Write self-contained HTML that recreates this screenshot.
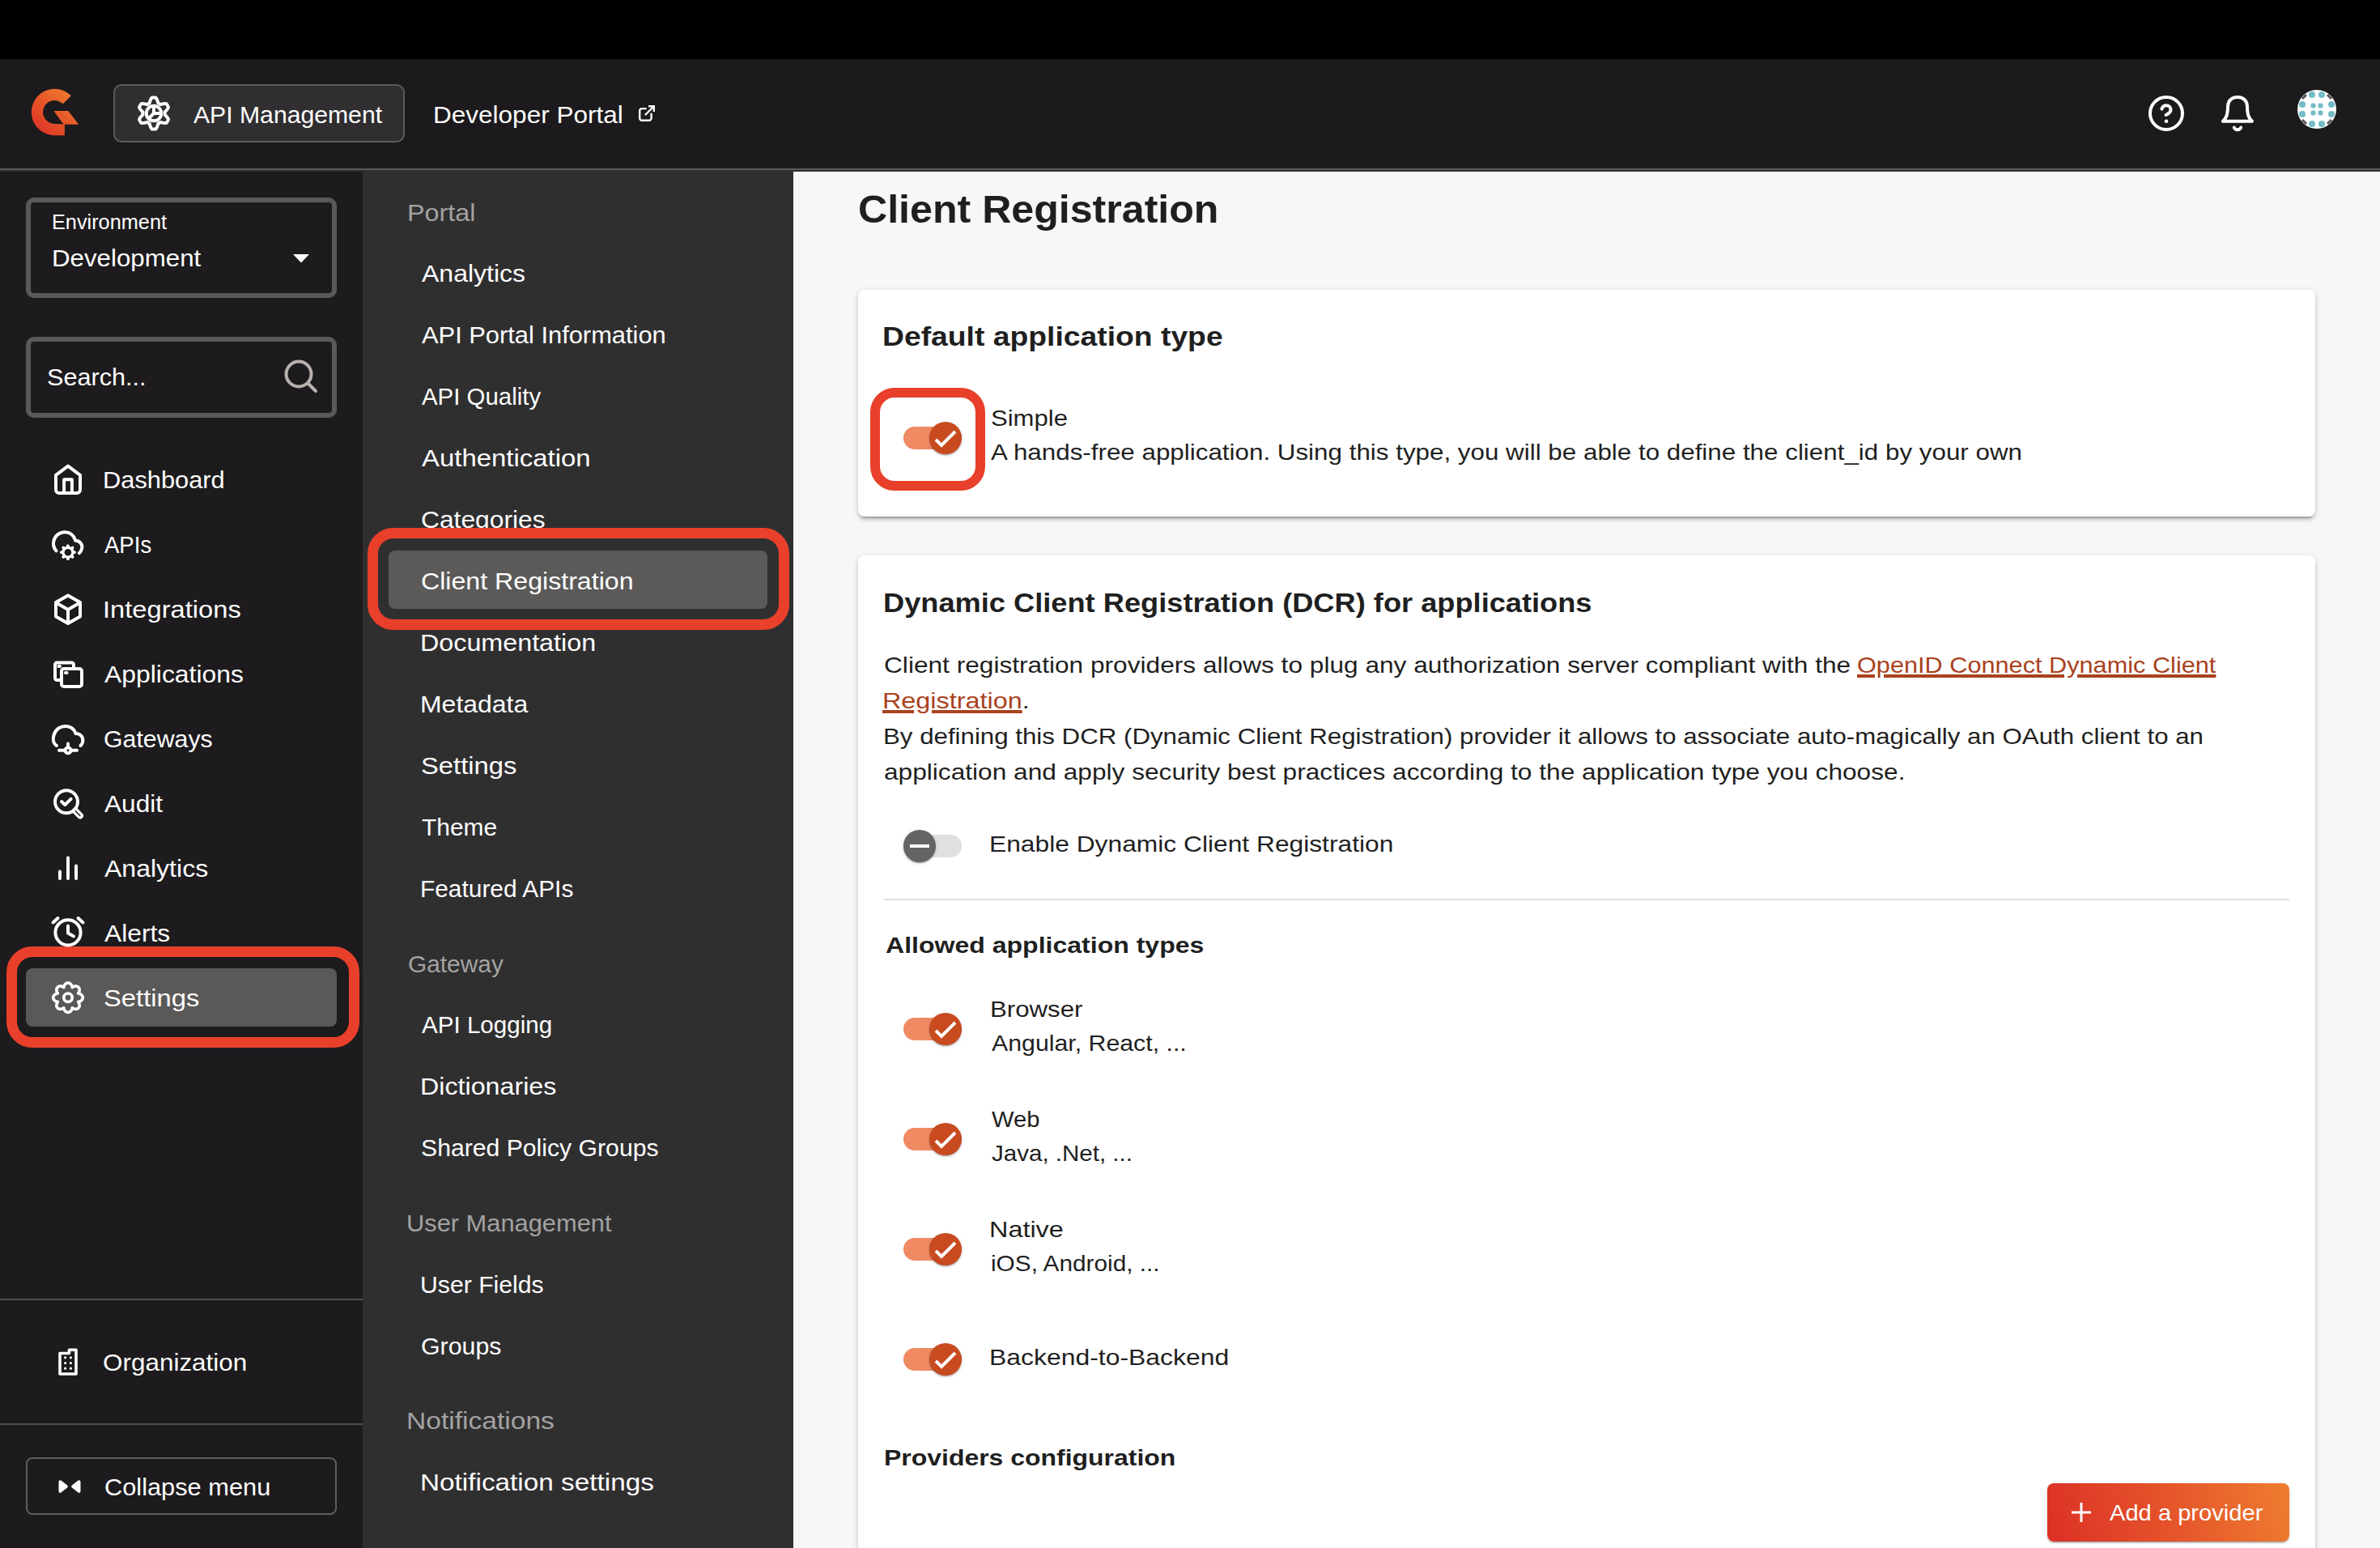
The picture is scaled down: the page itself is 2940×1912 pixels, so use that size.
<!DOCTYPE html>
<html><head><meta charset="utf-8">
<style>
*{box-sizing:border-box}
html,body{margin:0;padding:0}
body{width:2940px;height:1912px;overflow:hidden;background:#000;position:relative;font-family:"Liberation Sans",sans-serif}
.a{position:absolute}
.t{position:absolute;white-space:nowrap;line-height:1;transform-origin:0 0;font-family:"Liberation Sans",sans-serif}
.t u{text-decoration-thickness:3.5px;text-underline-offset:2px}
svg{position:absolute;overflow:visible}
.ic{fill:none;stroke:#fff;stroke-width:4;stroke-linecap:round;stroke-linejoin:round}
.card{position:absolute;background:#fff;border-radius:8px;box-shadow:0 6px 2px -4px rgba(0,0,0,.2),0 4px 4px 0 rgba(0,0,0,.14),0 2px 10px 0 rgba(0,0,0,.12)}
.trk{position:absolute;width:72px;height:28px;border-radius:14px;background:#ef8a63}
.thm{position:absolute;width:40px;height:40px;border-radius:20px;background:#c84a1f;box-shadow:0 2px 2px -1px rgba(0,0,0,.25),0 1px 2px 0 rgba(0,0,0,.14),0 1px 5px 0 rgba(0,0,0,.12)}
</style></head><body>
<!-- header -->
<div class="a" style="left:0;top:73px;width:2940px;height:135px;background:#1c1a1c"></div>
<div class="a" style="left:0;top:208px;width:2940px;height:2px;background:#5b5a5b"></div>
<div class="a" style="left:0;top:210px;width:2940px;height:2px;background:#302f30"></div>
<!-- sidebars -->
<div class="a" style="left:0;top:212px;width:448px;height:1700px;background:#1d1b1d"></div>
<div class="a" style="left:448px;top:212px;width:532px;height:1700px;background:#302f30"></div>
<div class="a" style="left:980px;top:212px;width:1960px;height:1700px;background:#f7f7f7"></div>

<!-- logo -->
<svg style="left:30px;top:100px" width="80" height="80" viewBox="0 0 80 80">
<defs><linearGradient id="lg" gradientUnits="userSpaceOnUse" x1="14" y1="66" x2="62" y2="14"><stop offset="0" stop-color="#dc2f24"/><stop offset="1" stop-color="#f07e30"/></linearGradient></defs>
<path fill="url(#lg)" d="M57.8 18.2 A28.7 28.7 0 1 0 37.5 67.2 L49.9 67.2 L49.9 53.5 L37.5 53.05 A14.5 14.5 0 1 1 47.75 28.25 Z"/>
<path fill="url(#lg)" d="M36.4 37 L54.3 37 L67.2 53.7 L48.6 53.7 Z"/>
</svg>
<!-- API management button -->
<div class="a" style="left:140px;top:104px;width:360px;height:72px;border:2px solid #5d5b5b;border-radius:10px;background:#302e30"></div>
<svg style="left:166px;top:116px" width="48" height="48" viewBox="0 0 48 48"><g class="ic">
<path d="M37.70 24.00 L37.70 24.24 L37.69 24.48 L37.68 24.72 L37.67 24.96 L37.65 25.19 L37.62 25.43 L37.60 25.67 L37.84 25.95 L38.12 26.24 L38.42 26.54 L38.73 26.86 L39.05 27.20 L39.38 27.55 L39.71 27.92 L40.03 28.30 L40.35 28.69 L40.65 29.09 L40.94 29.50 L41.20 29.92 L41.44 30.35 L41.65 30.77 L41.82 31.20 L41.95 31.62 L41.81 31.93 L41.67 32.24 L41.53 32.55 L41.37 32.85 L41.22 33.15 L41.06 33.45 L40.89 33.75 L40.71 34.04 L40.54 34.33 L40.35 34.62 L40.17 34.90 L39.97 35.18 L39.78 35.46 L39.57 35.74 L39.15 35.83 L38.69 35.89 L38.22 35.93 L37.73 35.94 L37.24 35.92 L36.74 35.88 L36.24 35.82 L35.74 35.74 L35.25 35.65 L34.77 35.55 L34.30 35.44 L33.85 35.33 L33.41 35.22 L33.00 35.11 L32.61 35.02 L32.24 34.94 L32.05 35.08 L31.86 35.22 L31.66 35.36 L31.46 35.49 L31.26 35.62 L31.06 35.74 L30.85 35.86 L30.64 35.98 L30.43 36.10 L30.22 36.21 L30.01 36.31 L29.79 36.42 L29.57 36.52 L29.35 36.61 L29.24 36.96 L29.12 37.35 L29.01 37.76 L28.89 38.19 L28.76 38.64 L28.62 39.10 L28.46 39.56 L28.30 40.03 L28.11 40.50 L27.92 40.97 L27.70 41.42 L27.47 41.86 L27.22 42.28 L26.96 42.67 L26.67 43.03 L26.38 43.35 L26.04 43.39 L25.70 43.43 L25.36 43.45 L25.02 43.47 L24.68 43.49 L24.34 43.50 L24.00 43.50 L23.66 43.50 L23.32 43.49 L22.98 43.47 L22.64 43.45 L22.30 43.43 L21.96 43.39 L21.62 43.35 L21.33 43.03 L21.04 42.67 L20.78 42.28 L20.53 41.86 L20.30 41.42 L20.08 40.97 L19.89 40.50 L19.70 40.03 L19.54 39.56 L19.38 39.10 L19.24 38.64 L19.11 38.19 L18.99 37.76 L18.88 37.35 L18.76 36.96 L18.65 36.61 L18.43 36.52 L18.21 36.42 L17.99 36.31 L17.78 36.21 L17.57 36.10 L17.36 35.98 L17.15 35.86 L16.94 35.74 L16.74 35.62 L16.54 35.49 L16.34 35.36 L16.14 35.22 L15.95 35.08 L15.76 34.94 L15.39 35.02 L15.00 35.11 L14.59 35.22 L14.15 35.33 L13.70 35.44 L13.23 35.55 L12.75 35.65 L12.26 35.74 L11.76 35.82 L11.26 35.88 L10.76 35.92 L10.27 35.94 L9.78 35.93 L9.31 35.89 L8.85 35.83 L8.43 35.74 L8.22 35.46 L8.03 35.18 L7.83 34.90 L7.65 34.62 L7.46 34.33 L7.29 34.04 L7.11 33.75 L6.94 33.45 L6.78 33.15 L6.63 32.85 L6.47 32.55 L6.33 32.24 L6.19 31.93 L6.05 31.62 L6.18 31.20 L6.35 30.77 L6.56 30.35 L6.80 29.92 L7.06 29.50 L7.35 29.09 L7.65 28.69 L7.97 28.30 L8.29 27.92 L8.62 27.55 L8.95 27.20 L9.27 26.86 L9.58 26.54 L9.88 26.24 L10.16 25.95 L10.40 25.67 L10.38 25.43 L10.35 25.19 L10.33 24.96 L10.32 24.72 L10.31 24.48 L10.30 24.24 L10.30 24.00 L10.30 23.76 L10.31 23.52 L10.32 23.28 L10.33 23.04 L10.35 22.81 L10.38 22.57 L10.40 22.33 L10.16 22.05 L9.88 21.76 L9.58 21.46 L9.27 21.14 L8.95 20.80 L8.62 20.45 L8.29 20.08 L7.97 19.70 L7.65 19.31 L7.35 18.91 L7.06 18.50 L6.80 18.08 L6.56 17.65 L6.35 17.23 L6.18 16.80 L6.05 16.38 L6.19 16.07 L6.33 15.76 L6.47 15.45 L6.63 15.15 L6.78 14.85 L6.94 14.55 L7.11 14.25 L7.29 13.96 L7.46 13.67 L7.65 13.38 L7.83 13.10 L8.03 12.82 L8.22 12.54 L8.43 12.26 L8.85 12.17 L9.31 12.11 L9.78 12.07 L10.27 12.06 L10.76 12.08 L11.26 12.12 L11.76 12.18 L12.26 12.26 L12.75 12.35 L13.23 12.45 L13.70 12.56 L14.15 12.67 L14.59 12.78 L15.00 12.89 L15.39 12.98 L15.76 13.06 L15.95 12.92 L16.14 12.78 L16.34 12.64 L16.54 12.51 L16.74 12.38 L16.94 12.26 L17.15 12.14 L17.36 12.02 L17.57 11.90 L17.78 11.79 L17.99 11.69 L18.21 11.58 L18.43 11.48 L18.65 11.39 L18.76 11.04 L18.88 10.65 L18.99 10.24 L19.11 9.81 L19.24 9.36 L19.38 8.90 L19.54 8.44 L19.70 7.97 L19.89 7.50 L20.08 7.03 L20.30 6.58 L20.53 6.14 L20.78 5.72 L21.04 5.33 L21.33 4.97 L21.62 4.65 L21.96 4.61 L22.30 4.57 L22.64 4.55 L22.98 4.53 L23.32 4.51 L23.66 4.50 L24.00 4.50 L24.34 4.50 L24.68 4.51 L25.02 4.53 L25.36 4.55 L25.70 4.57 L26.04 4.61 L26.38 4.65 L26.67 4.97 L26.96 5.33 L27.22 5.72 L27.47 6.14 L27.70 6.58 L27.92 7.03 L28.11 7.50 L28.30 7.97 L28.46 8.44 L28.62 8.90 L28.76 9.36 L28.89 9.81 L29.01 10.24 L29.12 10.65 L29.24 11.04 L29.35 11.39 L29.57 11.48 L29.79 11.58 L30.01 11.69 L30.22 11.79 L30.43 11.90 L30.64 12.02 L30.85 12.14 L31.06 12.26 L31.26 12.38 L31.46 12.51 L31.66 12.64 L31.86 12.78 L32.05 12.92 L32.24 13.06 L32.61 12.98 L33.00 12.89 L33.41 12.78 L33.85 12.67 L34.30 12.56 L34.77 12.45 L35.25 12.35 L35.74 12.26 L36.24 12.18 L36.74 12.12 L37.24 12.08 L37.73 12.06 L38.22 12.07 L38.69 12.11 L39.15 12.17 L39.57 12.26 L39.78 12.54 L39.97 12.82 L40.17 13.10 L40.35 13.38 L40.54 13.67 L40.71 13.96 L40.89 14.25 L41.06 14.55 L41.22 14.85 L41.37 15.15 L41.53 15.45 L41.67 15.76 L41.81 16.07 L41.95 16.38 L41.82 16.80 L41.65 17.23 L41.44 17.65 L41.20 18.08 L40.94 18.50 L40.65 18.91 L40.35 19.31 L40.03 19.70 L39.71 20.08 L39.38 20.45 L39.05 20.80 L38.73 21.14 L38.42 21.46 L38.12 21.76 L37.84 22.05 L37.60 22.33 L37.62 22.57 L37.65 22.81 L37.67 23.04 L37.68 23.28 L37.69 23.52 L37.70 23.76 Z"/><circle cx="24" cy="24" r="9.3"/><path d="M24 15.5 V24 L17.5 30.5"/><path d="M24 24 H33"/></g></svg>
<!-- external link -->
<svg style="left:786px;top:128px" width="26" height="26" viewBox="0 0 26 26"><g fill="none" stroke="#fff" stroke-width="2.4">
<path d="M12.7 6.1 H7 a2.8 2.8 0 0 0 -2.8 2.8 V18 a2.8 2.8 0 0 0 2.8 2.8 H15.8 a2.8 2.8 0 0 0 2.8 -2.8 V11.8"/><path d="M15 3.2 H21.8 V10" stroke-linecap="butt"/><path d="M21.5 3.5 L11.5 13.5" stroke-linecap="round"/></g></svg>
<!-- help -->
<svg style="left:2652px;top:116px" width="48" height="48" viewBox="0 0 48 48"><g class="ic">
<circle cx="24" cy="24" r="20"/><path d="M18.4 18.6 C19.2 15.7 21.4 14.2 24 14.2 C27 14.2 29.5 16.4 29.5 19.6 C29.5 22.8 26.5 24.6 23.6 26"/></g><circle cx="24" cy="33.7" r="2.3" fill="#fff"/></svg>
<!-- bell -->
<svg style="left:2740px;top:116px" width="48" height="48" viewBox="0 0 48 48"><g class="ic">
<path d="M6 33.8 H42 C38.8 30.8 36.8 27 36.3 21.5 L35.9 14.5 C35.4 8 30.5 4 24 4 C17.5 4 12.6 8 12.1 14.5 L11.7 21.5 C11.2 27 9.2 30.8 6 33.8 Z"/><path d="M19.8 41.5 a4.6 4.6 0 0 0 8.4 0"/></g></svg>
<!-- avatar -->
<svg style="left:2838px;top:111px" width="48" height="48" viewBox="0 0 48 48">
<circle cx="24" cy="24" r="24" fill="#fff"/>
<g fill="#74bcc5"><circle cx="18" cy="6" r="4"/><circle cx="30" cy="6" r="4"/><circle cx="6" cy="18" r="4"/><circle cx="6" cy="30" r="4"/><circle cx="42" cy="18" r="4"/><circle cx="42" cy="30" r="4"/><circle cx="18" cy="42" r="4"/><circle cx="30" cy="42" r="4"/>
<rect x="16.5" y="16.5" width="6" height="6" rx="2"/><rect x="25.5" y="16.5" width="6" height="6" rx="2"/><rect x="16.5" y="25.5" width="6" height="6" rx="2"/><rect x="25.5" y="25.5" width="6" height="6" rx="2"/></g>
<g stroke="#555" stroke-width="3"><path d="M6 11 L11 6"/><path d="M37 6 L42 11"/><path d="M6 37 L11 42"/><path d="M37 42 L42 37"/></g>
</svg>

<!-- env select -->
<div class="a" style="left:32px;top:244px;width:384px;height:124px;border:6px solid #5a595a;border-radius:10px"></div>
<svg style="left:362px;top:314px" width="20" height="11" viewBox="0 0 20 11"><path d="M0 0 H20 L10 10.5 Z" fill="#fff"/></svg>
<!-- search -->
<div class="a" style="left:32px;top:416px;width:384px;height:100px;border:6px solid #5a595a;border-radius:10px"></div>
<svg style="left:350px;top:443px" width="44" height="44" viewBox="0 0 44 44"><g class="ic" style="stroke:#b9b1ae"><circle cx="19" cy="19" r="15.5"/><path d="M31 31 L40 40"/></g></svg>

<!-- nav highlight + annotation -->
<div class="a" style="left:32px;top:1196px;width:384px;height:72px;border-radius:8px;background:#5a5958"></div>
<div class="a" style="left:8px;top:1169px;width:436px;height:125px;border:13px solid #e8402a;border-radius:32px"></div>
<svg style="left:60px;top:568.6px" width="48" height="48" viewBox="0 0 48 48"><g class="ic"><path d="M13 40 H35 a4 4 0 0 0 4 -4 V17.8 L24 6.6 L9 17.8 V36 a4 4 0 0 0 4 4 Z"/><path d="M19.1 40 V23.2 H28.9 V40"/></g></svg>
<svg style="left:60px;top:648.6px" width="48" height="48" viewBox="0 0 48 48"><g class="ic"><path d="M9.5 31.3 C6.5 28.3 5.5 24 6.3 19.5 C7.6 13 13.3 8.2 20 8.2 C26.5 8.2 31.3 12.5 33.4 18.8 C38.8 19 42.5 23.5 41 29 C40.4 31.2 39.3 32.8 37.8 34.2"/></g><path d="M33.70 33.20 L33.70 33.37 L33.69 33.54 L33.69 33.71 L33.68 33.88 L33.66 34.05 L33.65 34.22 L33.63 34.39 L33.47 34.55 L33.16 34.67 L32.84 34.78 L32.52 34.87 L32.18 34.96 L31.86 35.04 L31.54 35.11 L31.24 35.17 L31.21 35.29 L31.17 35.42 L31.13 35.55 L31.09 35.67 L31.04 35.80 L31.00 35.92 L30.95 36.05 L30.90 36.17 L30.84 36.29 L30.79 36.41 L30.73 36.53 L30.67 36.65 L30.61 36.77 L30.55 36.88 L30.48 37.00 L30.65 37.26 L30.83 37.53 L31.00 37.81 L31.18 38.11 L31.34 38.41 L31.49 38.71 L31.62 39.02 L31.62 39.23 L31.52 39.37 L31.41 39.50 L31.30 39.63 L31.18 39.76 L31.07 39.88 L30.95 40.01 L30.83 40.13 L30.71 40.25 L30.58 40.37 L30.46 40.48 L30.33 40.60 L30.20 40.71 L30.07 40.82 L29.93 40.92 L29.72 40.92 L29.41 40.79 L29.11 40.64 L28.81 40.48 L28.51 40.30 L28.23 40.13 L27.96 39.95 L27.70 39.78 L27.58 39.85 L27.47 39.91 L27.35 39.97 L27.23 40.03 L27.11 40.09 L26.99 40.14 L26.87 40.20 L26.75 40.25 L26.62 40.30 L26.50 40.34 L26.37 40.39 L26.25 40.43 L26.12 40.47 L25.99 40.51 L25.87 40.54 L25.81 40.84 L25.74 41.16 L25.66 41.48 L25.57 41.82 L25.48 42.14 L25.37 42.46 L25.25 42.77 L25.09 42.93 L24.92 42.95 L24.75 42.96 L24.58 42.98 L24.41 42.99 L24.24 42.99 L24.07 43.00 L23.90 43.00 L23.73 43.00 L23.56 42.99 L23.39 42.99 L23.22 42.98 L23.05 42.96 L22.88 42.95 L22.71 42.93 L22.55 42.77 L22.43 42.46 L22.32 42.14 L22.23 41.82 L22.14 41.48 L22.06 41.16 L21.99 40.84 L21.93 40.54 L21.81 40.51 L21.68 40.47 L21.55 40.43 L21.43 40.39 L21.30 40.34 L21.18 40.30 L21.05 40.25 L20.93 40.20 L20.81 40.14 L20.69 40.09 L20.57 40.03 L20.45 39.97 L20.33 39.91 L20.22 39.85 L20.10 39.78 L19.84 39.95 L19.57 40.13 L19.29 40.30 L18.99 40.48 L18.69 40.64 L18.39 40.79 L18.08 40.92 L17.87 40.92 L17.73 40.82 L17.60 40.71 L17.47 40.60 L17.34 40.48 L17.22 40.37 L17.09 40.25 L16.97 40.13 L16.85 40.01 L16.73 39.88 L16.62 39.76 L16.50 39.63 L16.39 39.50 L16.28 39.37 L16.18 39.23 L16.18 39.02 L16.31 38.71 L16.46 38.41 L16.62 38.11 L16.80 37.81 L16.97 37.53 L17.15 37.26 L17.32 37.00 L17.25 36.88 L17.19 36.77 L17.13 36.65 L17.07 36.53 L17.01 36.41 L16.96 36.29 L16.90 36.17 L16.85 36.05 L16.80 35.92 L16.76 35.80 L16.71 35.67 L16.67 35.55 L16.63 35.42 L16.59 35.29 L16.56 35.17 L16.26 35.11 L15.94 35.04 L15.62 34.96 L15.28 34.87 L14.96 34.78 L14.64 34.67 L14.33 34.55 L14.17 34.39 L14.15 34.22 L14.14 34.05 L14.12 33.88 L14.11 33.71 L14.11 33.54 L14.10 33.37 L14.10 33.20 L14.10 33.03 L14.11 32.86 L14.11 32.69 L14.12 32.52 L14.14 32.35 L14.15 32.18 L14.17 32.01 L14.33 31.85 L14.64 31.73 L14.96 31.62 L15.28 31.53 L15.62 31.44 L15.94 31.36 L16.26 31.29 L16.56 31.23 L16.59 31.11 L16.63 30.98 L16.67 30.85 L16.71 30.73 L16.76 30.60 L16.80 30.48 L16.85 30.35 L16.90 30.23 L16.96 30.11 L17.01 29.99 L17.07 29.87 L17.13 29.75 L17.19 29.63 L17.25 29.52 L17.32 29.40 L17.15 29.14 L16.97 28.87 L16.80 28.59 L16.62 28.29 L16.46 27.99 L16.31 27.69 L16.18 27.38 L16.18 27.17 L16.28 27.03 L16.39 26.90 L16.50 26.77 L16.62 26.64 L16.73 26.52 L16.85 26.39 L16.97 26.27 L17.09 26.15 L17.22 26.03 L17.34 25.92 L17.47 25.80 L17.60 25.69 L17.73 25.58 L17.87 25.48 L18.08 25.48 L18.39 25.61 L18.69 25.76 L18.99 25.92 L19.29 26.10 L19.57 26.27 L19.84 26.45 L20.10 26.62 L20.22 26.55 L20.33 26.49 L20.45 26.43 L20.57 26.37 L20.69 26.31 L20.81 26.26 L20.93 26.20 L21.05 26.15 L21.18 26.10 L21.30 26.06 L21.43 26.01 L21.55 25.97 L21.68 25.93 L21.81 25.89 L21.93 25.86 L21.99 25.56 L22.06 25.24 L22.14 24.92 L22.23 24.58 L22.32 24.26 L22.43 23.94 L22.55 23.63 L22.71 23.47 L22.88 23.45 L23.05 23.44 L23.22 23.42 L23.39 23.41 L23.56 23.41 L23.73 23.40 L23.90 23.40 L24.07 23.40 L24.24 23.41 L24.41 23.41 L24.58 23.42 L24.75 23.44 L24.92 23.45 L25.09 23.47 L25.25 23.63 L25.37 23.94 L25.48 24.26 L25.57 24.58 L25.66 24.92 L25.74 25.24 L25.81 25.56 L25.87 25.86 L25.99 25.89 L26.12 25.93 L26.25 25.97 L26.37 26.01 L26.50 26.06 L26.62 26.10 L26.75 26.15 L26.87 26.20 L26.99 26.26 L27.11 26.31 L27.23 26.37 L27.35 26.43 L27.47 26.49 L27.58 26.55 L27.70 26.62 L27.96 26.45 L28.23 26.27 L28.51 26.10 L28.81 25.92 L29.11 25.76 L29.41 25.61 L29.72 25.48 L29.93 25.48 L30.07 25.58 L30.20 25.69 L30.33 25.80 L30.46 25.92 L30.58 26.03 L30.71 26.15 L30.83 26.27 L30.95 26.39 L31.07 26.52 L31.18 26.64 L31.30 26.77 L31.41 26.90 L31.52 27.03 L31.62 27.17 L31.62 27.38 L31.49 27.69 L31.34 27.99 L31.18 28.29 L31.00 28.59 L30.83 28.87 L30.65 29.14 L30.48 29.40 L30.55 29.52 L30.61 29.63 L30.67 29.75 L30.73 29.87 L30.79 29.99 L30.84 30.11 L30.90 30.23 L30.95 30.35 L31.00 30.48 L31.04 30.60 L31.09 30.73 L31.13 30.85 L31.17 30.98 L31.21 31.11 L31.24 31.23 L31.54 31.29 L31.86 31.36 L32.18 31.44 L32.52 31.53 L32.84 31.62 L33.16 31.73 L33.47 31.85 L33.63 32.01 L33.65 32.18 L33.66 32.35 L33.68 32.52 L33.69 32.69 L33.69 32.86 L33.70 33.03 Z" fill="#fff"/><circle cx="23.9" cy="33.2" r="4.3" fill="#1d1b1d"/><g></g></svg>
<svg style="left:60px;top:728.6px" width="48" height="48" viewBox="0 0 48 48"><g class="ic"><path d="M24 6.5 L39 15 V32.5 L24 41 L9 32.5 V15 Z"/><path d="M9.5 15.5 L24 24 L38.5 15.5"/><path d="M24 24 V40.5"/></g></svg>
<svg style="left:60px;top:808.6px" width="48" height="48" viewBox="0 0 48 48"><g class="ic"><path d="M14 31 H10.5 a2.5 2.5 0 0 1 -2.5 -2.5 V12 a2.5 2.5 0 0 1 2.5 -2.5 H28.5 a2.5 2.5 0 0 1 2.5 2.5 V16.5"/><rect x="16" y="17" width="25" height="22" rx="3"/><path d="M12.5 14 H14"/><path d="M21 22 H22.5"/></g></svg>
<svg style="left:60px;top:888.6px" width="48" height="48" viewBox="0 0 48 48"><g class="ic"><path d="M10 32 C5.5 29 5 23.5 6.5 19 C8.5 11.5 15 7.5 22 8 C28 8.5 32 12.5 33.5 17 C39.5 17 43.5 21.5 42 28 C41.5 30 40.5 31 39.5 32"/><path d="M24 29.5 V34"/><path d="M13 37.8 H20.3"/><path d="M27.7 37.8 H35"/><circle cx="24" cy="37.8" r="3.5"/></g></svg>
<svg style="left:60px;top:968.6px" width="48" height="48" viewBox="0 0 48 48"><g class="ic"><circle cx="22" cy="21.2" r="14"/><path d="M33 32.5 L39 38.5" style="stroke-width:8"/><path d="M33.3 32.8 L38.7 38.2" style="stroke:#1d1b1d;stroke-width:1.6"/><path d="M16 21 L20.3 25 L27.6 17.8"/></g></svg>
<svg style="left:60px;top:1048.6px" width="48" height="48" viewBox="0 0 48 48"><g class="ic"><path d="M14 36 V27.5"/><path d="M24 36 V10.5"/><path d="M34 36 V20.5"/></g></svg>
<svg style="left:60px;top:1128.6px" width="48" height="48" viewBox="0 0 48 48"><g class="ic"><circle cx="24" cy="22.8" r="15.6"/><path d="M24 14.5 V23.5 L31 27.5"/><path d="M5.5 10.5 L11.5 5"/><path d="M42.5 10.5 L36.5 5"/></g></svg>
<svg style="left:60px;top:1208.6px" width="48" height="48" viewBox="0 0 48 48"><g class="ic" style="stroke-width:3.6"><path d="M42.20 23.20 L42.19 23.52 L42.15 23.83 L42.09 24.15 L42.01 24.46 L41.90 24.77 L41.77 25.07 L41.61 25.36 L41.44 25.65 L41.24 25.93 L41.02 26.20 L40.77 26.46 L40.51 26.71 L40.23 26.95 L39.93 27.17 L39.61 27.38 L39.27 27.58 L38.91 27.76 L38.53 27.92 L38.13 28.06 L37.70 28.19 L37.25 28.28 L36.73 28.34 L36.64 28.56 L36.96 28.97 L37.22 29.36 L37.43 29.75 L37.61 30.14 L37.76 30.52 L37.89 30.90 L37.99 31.28 L38.07 31.65 L38.13 32.03 L38.16 32.39 L38.17 32.76 L38.15 33.11 L38.12 33.46 L38.06 33.80 L37.98 34.12 L37.88 34.44 L37.76 34.75 L37.62 35.04 L37.46 35.32 L37.28 35.59 L37.09 35.84 L36.87 36.07 L36.64 36.29 L36.39 36.48 L36.12 36.66 L35.84 36.82 L35.55 36.96 L35.24 37.08 L34.92 37.18 L34.60 37.26 L34.26 37.32 L33.91 37.35 L33.56 37.37 L33.19 37.36 L32.83 37.33 L32.45 37.27 L32.08 37.19 L31.70 37.09 L31.32 36.96 L30.94 36.81 L30.55 36.63 L30.16 36.42 L29.77 36.16 L29.36 35.84 L29.14 35.93 L29.08 36.45 L28.99 36.90 L28.86 37.33 L28.72 37.73 L28.56 38.11 L28.38 38.47 L28.18 38.81 L27.97 39.13 L27.75 39.43 L27.51 39.71 L27.26 39.97 L27.00 40.22 L26.73 40.44 L26.45 40.64 L26.16 40.81 L25.87 40.97 L25.57 41.10 L25.26 41.21 L24.95 41.29 L24.63 41.35 L24.32 41.39 L24.00 41.40 L23.68 41.39 L23.37 41.35 L23.05 41.29 L22.74 41.21 L22.43 41.10 L22.13 40.97 L21.84 40.81 L21.55 40.64 L21.27 40.44 L21.00 40.22 L20.74 39.97 L20.49 39.71 L20.25 39.43 L20.03 39.13 L19.82 38.81 L19.62 38.47 L19.44 38.11 L19.28 37.73 L19.14 37.33 L19.01 36.90 L18.92 36.45 L18.86 35.93 L18.64 35.84 L18.23 36.16 L17.84 36.42 L17.45 36.63 L17.06 36.81 L16.68 36.96 L16.30 37.09 L15.92 37.19 L15.55 37.27 L15.17 37.33 L14.81 37.36 L14.44 37.37 L14.09 37.35 L13.74 37.32 L13.40 37.26 L13.08 37.18 L12.76 37.08 L12.45 36.96 L12.16 36.82 L11.88 36.66 L11.61 36.48 L11.36 36.29 L11.13 36.07 L10.91 35.84 L10.72 35.59 L10.54 35.32 L10.38 35.04 L10.24 34.75 L10.12 34.44 L10.02 34.12 L9.94 33.80 L9.88 33.46 L9.85 33.11 L9.83 32.76 L9.84 32.39 L9.87 32.03 L9.93 31.65 L10.01 31.28 L10.11 30.90 L10.24 30.52 L10.39 30.14 L10.57 29.75 L10.78 29.36 L11.04 28.97 L11.36 28.56 L11.27 28.34 L10.75 28.28 L10.30 28.19 L9.87 28.06 L9.47 27.92 L9.09 27.76 L8.73 27.58 L8.39 27.38 L8.07 27.17 L7.77 26.95 L7.49 26.71 L7.23 26.46 L6.98 26.20 L6.76 25.93 L6.56 25.65 L6.39 25.36 L6.23 25.07 L6.10 24.77 L5.99 24.46 L5.91 24.15 L5.85 23.83 L5.81 23.52 L5.80 23.20 L5.81 22.88 L5.85 22.57 L5.91 22.25 L5.99 21.94 L6.10 21.63 L6.23 21.33 L6.39 21.04 L6.56 20.75 L6.76 20.47 L6.98 20.20 L7.23 19.94 L7.49 19.69 L7.77 19.45 L8.07 19.23 L8.39 19.02 L8.73 18.82 L9.09 18.64 L9.47 18.48 L9.87 18.34 L10.30 18.21 L10.75 18.12 L11.27 18.06 L11.36 17.84 L11.04 17.43 L10.78 17.04 L10.57 16.65 L10.39 16.26 L10.24 15.88 L10.11 15.50 L10.01 15.12 L9.93 14.75 L9.87 14.37 L9.84 14.01 L9.83 13.64 L9.85 13.29 L9.88 12.94 L9.94 12.60 L10.02 12.28 L10.12 11.96 L10.24 11.65 L10.38 11.36 L10.54 11.08 L10.72 10.81 L10.91 10.56 L11.13 10.33 L11.36 10.11 L11.61 9.92 L11.88 9.74 L12.16 9.58 L12.45 9.44 L12.76 9.32 L13.08 9.22 L13.40 9.14 L13.74 9.08 L14.09 9.05 L14.44 9.03 L14.81 9.04 L15.17 9.07 L15.55 9.13 L15.92 9.21 L16.30 9.31 L16.68 9.44 L17.06 9.59 L17.45 9.77 L17.84 9.98 L18.23 10.24 L18.64 10.56 L18.86 10.47 L18.92 9.95 L19.01 9.50 L19.14 9.07 L19.28 8.67 L19.44 8.29 L19.62 7.93 L19.82 7.59 L20.03 7.27 L20.25 6.97 L20.49 6.69 L20.74 6.43 L21.00 6.18 L21.27 5.96 L21.55 5.76 L21.84 5.59 L22.13 5.43 L22.43 5.30 L22.74 5.19 L23.05 5.11 L23.37 5.05 L23.68 5.01 L24.00 5.00 L24.32 5.01 L24.63 5.05 L24.95 5.11 L25.26 5.19 L25.57 5.30 L25.87 5.43 L26.16 5.59 L26.45 5.76 L26.73 5.96 L27.00 6.18 L27.26 6.43 L27.51 6.69 L27.75 6.97 L27.97 7.27 L28.18 7.59 L28.38 7.93 L28.56 8.29 L28.72 8.67 L28.86 9.07 L28.99 9.50 L29.08 9.95 L29.14 10.47 L29.36 10.56 L29.77 10.24 L30.16 9.98 L30.55 9.77 L30.94 9.59 L31.32 9.44 L31.70 9.31 L32.08 9.21 L32.45 9.13 L32.83 9.07 L33.19 9.04 L33.56 9.03 L33.91 9.05 L34.26 9.08 L34.60 9.14 L34.92 9.22 L35.24 9.32 L35.55 9.44 L35.84 9.58 L36.12 9.74 L36.39 9.92 L36.64 10.11 L36.87 10.33 L37.09 10.56 L37.28 10.81 L37.46 11.08 L37.62 11.36 L37.76 11.65 L37.88 11.96 L37.98 12.28 L38.06 12.60 L38.12 12.94 L38.15 13.29 L38.17 13.64 L38.16 14.01 L38.13 14.37 L38.07 14.75 L37.99 15.12 L37.89 15.50 L37.76 15.88 L37.61 16.26 L37.43 16.65 L37.22 17.04 L36.96 17.43 L36.64 17.84 L36.73 18.06 L37.25 18.12 L37.70 18.21 L38.13 18.34 L38.53 18.48 L38.91 18.64 L39.27 18.82 L39.61 19.02 L39.93 19.23 L40.23 19.45 L40.51 19.69 L40.77 19.94 L41.02 20.20 L41.24 20.47 L41.44 20.75 L41.61 21.04 L41.77 21.33 L41.90 21.63 L42.01 21.94 L42.09 22.25 L42.15 22.57 L42.19 22.88 Z"/><circle cx="24" cy="23.2" r="5.2"/></g></svg>
<svg style="left:60px;top:1658px" width="48" height="48" viewBox="0 0 48 48"><g class="ic" style="stroke-width:3.6"><path d="M14 39 V13.5 H25.5 V9.3 H34 V39 Z" /></g><g fill="#fff"><circle cx="20.6" cy="18.8" r="1.6"/><circle cx="27.4" cy="18.8" r="1.6"/><circle cx="20.6" cy="25.6" r="1.6"/><circle cx="27.4" cy="25.6" r="1.6"/><circle cx="20.6" cy="32.2" r="1.6"/><circle cx="27.4" cy="32.2" r="1.6"/></g></svg>
<svg style="left:72px;top:1827px" width="28" height="18" viewBox="0 0 28 18"><g fill="#fff" stroke="#fff" stroke-width="4" stroke-linejoin="round"><path d="M2.5 3.2 L9.8 9 L2.5 14.8 Z"/><path d="M25.5 3.2 L18.2 9 L25.5 14.8 Z"/></g></svg>
<div class="a" style="left:0;top:1604px;width:448px;height:2px;background:#4e4d4e"></div>
<div class="a" style="left:0;top:1758px;width:448px;height:2px;background:#4e4d4e"></div>
<div class="a" style="left:32px;top:1800px;width:384px;height:71px;border:2px solid #5e5d5e;border-radius:8px"></div>

<!-- second sidebar highlight + annotation -->
<div class="a" style="left:480px;top:680px;width:468px;height:72px;border-radius:8px;background:#5b5a59"></div>

<!-- main -->
<div class="card" style="left:1060px;top:358px;width:1800px;height:280px"></div>
<div class="card" style="left:1060px;top:686px;width:1800px;height:1300px"></div>
<div class="a" style="left:1092px;top:1110px;width:1736px;height:2px;background:#e0e0e0"></div>
<div class="trk" style="left:1116px;top:527px"></div><div class="thm" style="left:1148px;top:521px"><svg style="left:0;top:0" width="40" height="40" viewBox="0 0 40 40"><path d="M8 22 L15 29 L32 12" fill="none" stroke="#fff" stroke-width="4" stroke-linecap="butt" stroke-linejoin="miter"/></svg></div>
<div class="trk" style="left:1116px;top:1257px"></div><div class="thm" style="left:1148px;top:1251px"><svg style="left:0;top:0" width="40" height="40" viewBox="0 0 40 40"><path d="M8 22 L15 29 L32 12" fill="none" stroke="#fff" stroke-width="4" stroke-linecap="butt" stroke-linejoin="miter"/></svg></div>
<div class="trk" style="left:1116px;top:1393px"></div><div class="thm" style="left:1148px;top:1387px"><svg style="left:0;top:0" width="40" height="40" viewBox="0 0 40 40"><path d="M8 22 L15 29 L32 12" fill="none" stroke="#fff" stroke-width="4" stroke-linecap="butt" stroke-linejoin="miter"/></svg></div>
<div class="trk" style="left:1116px;top:1529px"></div><div class="thm" style="left:1148px;top:1523px"><svg style="left:0;top:0" width="40" height="40" viewBox="0 0 40 40"><path d="M8 22 L15 29 L32 12" fill="none" stroke="#fff" stroke-width="4" stroke-linecap="butt" stroke-linejoin="miter"/></svg></div>
<div class="trk" style="left:1116px;top:1665px"></div><div class="thm" style="left:1148px;top:1659px"><svg style="left:0;top:0" width="40" height="40" viewBox="0 0 40 40"><path d="M8 22 L15 29 L32 12" fill="none" stroke="#fff" stroke-width="4" stroke-linecap="butt" stroke-linejoin="miter"/></svg></div>
<div class="trk" style="left:1116px;top:1031px;background:#e0e0e0"></div><div class="thm" style="left:1116px;top:1025px;background:#646464"><div class="a" style="left:8px;top:18px;width:24px;height:4px;background:#fff"></div></div>
<div class="a" style="left:2529px;top:1832px;width:299px;height:72px;border-radius:8px;background:linear-gradient(75deg,#dc3026 0%,#e4502a 45%,#ee7d30 100%);box-shadow:0 3px 1px -2px rgba(0,0,0,.2),0 2px 2px 0 rgba(0,0,0,.14),0 1px 5px 0 rgba(0,0,0,.12)"></div>
<svg style="left:2559px;top:1856px" width="24" height="24" viewBox="0 0 24 24"><g class="ic" style="stroke-width:3;stroke-linecap:butt"><path d="M12 0 V24"/><path d="M0 12 H24"/></g></svg>

<div class='t' style='left:239.0px;top:127.5px;font-size:29px;font-weight:400;color:#ffffff;transform:scaleX(1.0401);'>API Management</div>
<div class='t' style='left:534.8px;top:127.5px;font-size:29px;font-weight:400;color:#ffffff;transform:scaleX(1.0868);'>Developer Portal</div>
<div class='t' style='left:64.0px;top:262.3px;font-size:25px;font-weight:400;color:#ffffff;transform:scaleX(1.0116);'>Environment</div>
<div class='t' style='left:63.8px;top:304.9px;font-size:29px;font-weight:400;color:#ffffff;transform:scaleX(1.0781);'>Development</div>
<div class='t' style='left:57.5px;top:452.0px;font-size:29px;font-weight:400;color:#ffffff;transform:scaleX(1.0566);'>Search...</div>
<div class='t' style='left:126.7px;top:579.1px;font-size:29px;font-weight:400;color:#ffffff;transform:scaleX(1.0624);'>Dashboard</div>
<div class='t' style='left:128.8px;top:659.1px;font-size:29px;font-weight:400;color:#ffffff;transform:scaleX(0.9499);'>APIs</div>
<div class='t' style='left:126.5px;top:739.1px;font-size:29px;font-weight:400;color:#ffffff;transform:scaleX(1.1272);'>Integrations</div>
<div class='t' style='left:128.8px;top:819.1px;font-size:29px;font-weight:400;color:#ffffff;transform:scaleX(1.0996);'>Applications</div>
<div class='t' style='left:127.8px;top:899.1px;font-size:29px;font-weight:400;color:#ffffff;transform:scaleX(1.0444);'>Gateways</div>
<div class='t' style='left:128.8px;top:979.1px;font-size:29px;font-weight:400;color:#ffffff;transform:scaleX(1.0902);'>Audit</div>
<div class='t' style='left:128.8px;top:1059.1px;font-size:29px;font-weight:400;color:#ffffff;transform:scaleX(1.1044);'>Analytics</div>
<div class='t' style='left:128.8px;top:1139.1px;font-size:29px;font-weight:400;color:#ffffff;transform:scaleX(1.0960);'>Alerts</div>
<div class='t' style='left:127.7px;top:1219.1px;font-size:29px;font-weight:400;color:#ffffff;transform:scaleX(1.1308);'>Settings</div>
<div class='t' style='left:127.4px;top:1668.5px;font-size:29px;font-weight:400;color:#ffffff;transform:scaleX(1.0844);'>Organization</div>
<div class='t' style='left:128.9px;top:1822.5px;font-size:29px;font-weight:400;color:#ffffff;transform:scaleX(1.0611);'>Collapse menu</div>
<div class='t' style='left:502.8px;top:248.5px;font-size:29px;font-weight:400;color:#a3a2a2;transform:scaleX(1.1146);'>Portal</div>
<div class='t' style='left:521.0px;top:324.1px;font-size:29px;font-weight:400;color:#ffffff;transform:scaleX(1.1035);'>Analytics</div>
<div class='t' style='left:521.0px;top:400.1px;font-size:29px;font-weight:400;color:#ffffff;transform:scaleX(1.0635);'>API Portal Information</div>
<div class='t' style='left:521.0px;top:476.1px;font-size:29px;font-weight:400;color:#ffffff;transform:scaleX(1.0140);'>API Quality</div>
<div class='t' style='left:521.0px;top:552.1px;font-size:29px;font-weight:400;color:#ffffff;transform:scaleX(1.1348);'>Authentication</div>
<div class='t' style='left:519.9px;top:628.1px;font-size:29px;font-weight:400;color:#ffffff;transform:scaleX(1.0956);'>Categories</div>
<div class='t' style='left:519.9px;top:704.1px;font-size:29px;font-weight:400;color:#ffffff;transform:scaleX(1.1081);'>Client Registration</div>
<div class='t' style='left:518.8px;top:780.1px;font-size:29px;font-weight:400;color:#ffffff;transform:scaleX(1.1129);'>Documentation</div>
<div class='t' style='left:518.8px;top:856.1px;font-size:29px;font-weight:400;color:#ffffff;transform:scaleX(1.1020);'>Metadata</div>
<div class='t' style='left:519.9px;top:932.1px;font-size:29px;font-weight:400;color:#ffffff;transform:scaleX(1.1289);'>Settings</div>
<div class='t' style='left:521.0px;top:1008.1px;font-size:29px;font-weight:400;color:#ffffff;transform:scaleX(1.0322);'>Theme</div>
<div class='t' style='left:518.9px;top:1084.1px;font-size:29px;font-weight:400;color:#ffffff;transform:scaleX(1.0302);'>Featured APIs</div>
<div class='t' style='left:503.7px;top:1176.8px;font-size:29px;font-weight:400;color:#a3a2a2;transform:scaleX(1.0295);'>Gateway</div>
<div class='t' style='left:521.0px;top:1252.2px;font-size:29px;font-weight:400;color:#ffffff;transform:scaleX(1.0199);'>API Logging</div>
<div class='t' style='left:518.8px;top:1328.2px;font-size:29px;font-weight:400;color:#ffffff;transform:scaleX(1.1114);'>Dictionaries</div>
<div class='t' style='left:520.0px;top:1404.2px;font-size:29px;font-weight:400;color:#ffffff;transform:scaleX(1.0407);'>Shared Policy Groups</div>
<div class='t' style='left:501.9px;top:1496.5px;font-size:29px;font-weight:400;color:#a3a2a2;transform:scaleX(1.0626);'>User Management</div>
<div class='t' style='left:518.9px;top:1572.5px;font-size:29px;font-weight:400;color:#ffffff;transform:scaleX(1.0413);'>User Fields</div>
<div class='t' style='left:520.0px;top:1648.5px;font-size:29px;font-weight:400;color:#ffffff;transform:scaleX(1.0459);'>Groups</div>
<div class='t' style='left:501.7px;top:1740.5px;font-size:29px;font-weight:400;color:#a3a2a2;transform:scaleX(1.1579);'>Notifications</div>
<div class='t' style='left:518.7px;top:1816.5px;font-size:29px;font-weight:400;color:#ffffff;transform:scaleX(1.1488);'>Notification settings</div>
<div class='t' style='left:1060.0px;top:235.4px;font-size:48px;font-weight:700;color:#1f1f1f;transform:scaleX(1.0440);'>Client Registration</div>
<div class='t' style='left:1090.2px;top:399.3px;font-size:33px;font-weight:700;color:#1f1f1f;transform:scaleX(1.1301);'>Default application type</div>
<div class='t' style='left:1223.9px;top:503.3px;font-size:28px;font-weight:400;color:#1f1f1f;transform:scaleX(1.1093);'>Simple</div>
<div class='t' style='left:1224.0px;top:544.8px;font-size:28px;font-weight:400;color:#1f1f1f;transform:scaleX(1.1197);'>A hands-free application. Using this type, you will be able to define the client_id by your own</div>
<div class='t' style='left:1090.5px;top:727.6px;font-size:33px;font-weight:700;color:#1f1f1f;transform:scaleX(1.0977);'>Dynamic Client Registration (DCR) for applications</div>
<div class='t' style='left:1091.6px;top:807.7px;font-size:28px;font-weight:400;color:#1f1f1f;transform:scaleX(1.1300);'>Client registration providers allows to plug any authorization server compliant with the</div>
<div class='t' style='left:2294.4px;top:807.7px;font-size:28px;font-weight:400;color:#a9421d;transform:scaleX(1.0957);'><u>OpenID Connect Dynamic Client</u></div>
<div class='t' style='left:1090.4px;top:851.8px;font-size:28px;font-weight:400;color:#a9421d;transform:scaleX(1.1558);'><u>Registration</u><span style="color:#1f1f1f">.</span></div>
<div class='t' style='left:1090.5px;top:895.6px;font-size:28px;font-weight:400;color:#1f1f1f;transform:scaleX(1.1161);'>By defining this DCR (Dynamic Client Registration) provider it allows to associate auto-magically an OAuth client to an</div>
<div class='t' style='left:1091.6px;top:939.6px;font-size:28px;font-weight:400;color:#1f1f1f;transform:scaleX(1.1303);'>application and apply security best practices according to the application type you choose.</div>
<div class='t' style='left:1222.4px;top:1028.9px;font-size:28px;font-weight:400;color:#1f1f1f;transform:scaleX(1.1338);'>Enable Dynamic Client Registration</div>
<div class='t' style='left:1093.8px;top:1154.3px;font-size:28px;font-weight:700;color:#1f1f1f;transform:scaleX(1.1440);'>Allowed application types</div>
<div class='t' style='left:1222.5px;top:1233.3px;font-size:28px;font-weight:400;color:#1f1f1f;transform:scaleX(1.1139);'>Browser</div>
<div class='t' style='left:1224.7px;top:1275.1px;font-size:28px;font-weight:400;color:#1f1f1f;transform:scaleX(1.0816);'>Angular, React, ...</div>
<div class='t' style='left:1224.7px;top:1368.9px;font-size:28px;font-weight:400;color:#1f1f1f;transform:scaleX(1.0408);'>Web</div>
<div class='t' style='left:1224.7px;top:1410.7px;font-size:28px;font-weight:400;color:#1f1f1f;transform:scaleX(1.0547);'>Java, .Net, ...</div>
<div class='t' style='left:1222.4px;top:1505.3px;font-size:28px;font-weight:400;color:#1f1f1f;transform:scaleX(1.1564);'>Native</div>
<div class='t' style='left:1223.6px;top:1547.3px;font-size:28px;font-weight:400;color:#1f1f1f;transform:scaleX(1.0638);'>iOS, Android, ...</div>
<div class='t' style='left:1222.4px;top:1663.1px;font-size:28px;font-weight:400;color:#1f1f1f;transform:scaleX(1.1394);'>Backend-to-Backend</div>
<div class='t' style='left:1091.7px;top:1787.3px;font-size:28px;font-weight:700;color:#1f1f1f;transform:scaleX(1.1408);'>Providers configuration</div>
<div class='t' style='left:2606.0px;top:1855.3px;font-size:28px;font-weight:400;color:#ffffff;transform:scaleX(1.0397);'>Add a provider</div>
<!-- annotations on top -->
<div class="a" style="left:1075px;top:479px;width:142px;height:127px;border:12.6px solid #e8402a;border-radius:30px"></div>
<div class="a" style="left:454px;top:652px;width:521px;height:126px;border:13px solid #e8402a;border-radius:32px"></div>
</body></html>
